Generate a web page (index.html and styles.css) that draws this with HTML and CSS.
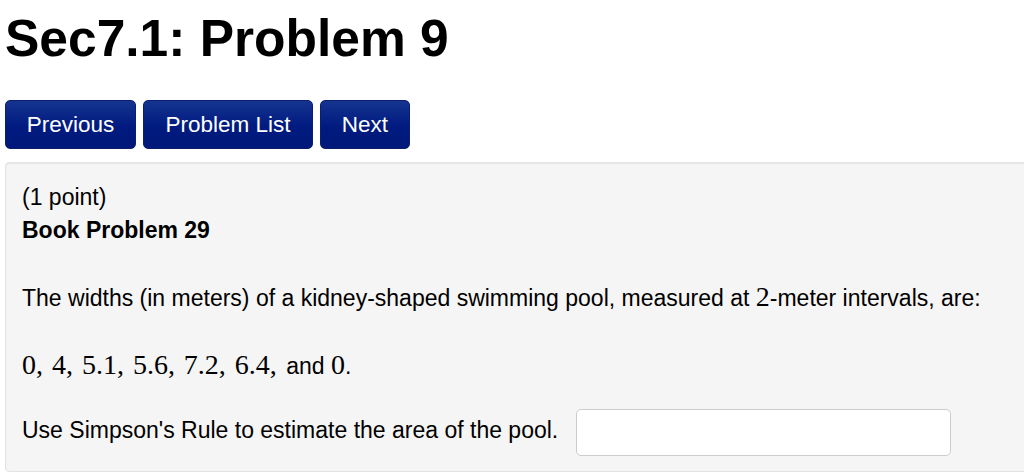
FILE: index.html
```html
<!DOCTYPE html>
<html>
<head>
<meta charset="utf-8">
<link rel="stylesheet" href="styles.css">
</head>
<body>
<div class="page">
  <h1 class="title">Sec7.1: Problem 9</h1>
  <div class="nav">
    <a class="btn btn-prev">Previous</a>
    <a class="btn btn-list">Problem List</a>
    <a class="btn btn-next">Next</a>
  </div>
  <div class="well">
    <div class="line">(1 point)</div>
    <div class="line bold">Book Problem 29</div>
    <div class="line gap">The widths (in meters) of a kidney-shaped swimming pool, measured at <span class="math">2</span>-meter intervals, are:</div>
    <div class="line gap"><span class="math nums">0, 4, 5.1, 5.6, 7.2, 6.4,</span> <span class="and">and</span> <span class="math">0</span>.</div>
    <div class="line gap answer"><span class="prompt">Use Simpson's Rule to estimate the area of the pool.</span><input class="field" type="text"></div>
  </div>
</div>
</body>
</html>
```
FILE: styles.css
```css
html, body {
  margin: 0;
  padding: 0;
  background: #ffffff;
  overflow: hidden;
}
body {
  font-family: "Liberation Sans", Arial, sans-serif;
  color: #000;
}
.page {
  padding-left: 5px;
}
.title {
  margin: 10px 0 0 0;
  font-size: 51.5px;
  line-height: 57px;
  font-weight: bold;
}
.nav {
  display: flex;
  gap: 7px;
  margin-top: 33px;
}
.btn {
  display: flex;
  align-items: center;
  justify-content: center;
  height: 47px;
  box-sizing: content-box;
  padding: 0 20px;
  border: 1px solid #0a1f6e;
  border-radius: 5px;
  background: linear-gradient(#15348f, #001a80 55%, #001878);
  color: #fff;
  font-size: 22.5px;
  cursor: pointer;
}
.btn-prev { width: 89px; }
.btn-list { width: 128px; }
.btn-next { width: 48px; }
.well {
  margin-top: 13px;
  width: 1040px;
  box-sizing: border-box;
  background: #f5f5f5;
  border: 1px solid #e3e3e3;
  border-radius: 4px;
  box-shadow: inset 0 1px 2px rgba(0,0,0,0.07);
  padding: 18px 16px 15px 16px;
  font-size: 23px;
  line-height: 33px;
}
.line {
  margin: 0;
}
.bold { font-weight: bold; }
.gap { margin-top: 33px; }
.math {
  font-family: "Liberation Serif", "Times New Roman", serif;
  font-size: 28px;
}
.nums {
  word-spacing: 0.07em;
}
.and {
  margin-left: 3px;
}
.answer {
  margin-top: 26px;
  display: flex;
  align-items: center;
}
.prompt {
  margin-bottom: 4px;
  white-space: nowrap;
}
.field {
  margin-left: 18px;
  width: 375px;
  height: 47px;
  box-sizing: border-box;
  border: 1px solid #cccccc;
  border-radius: 5px;
  background: #fff;
  font-size: 20px;
}
```
